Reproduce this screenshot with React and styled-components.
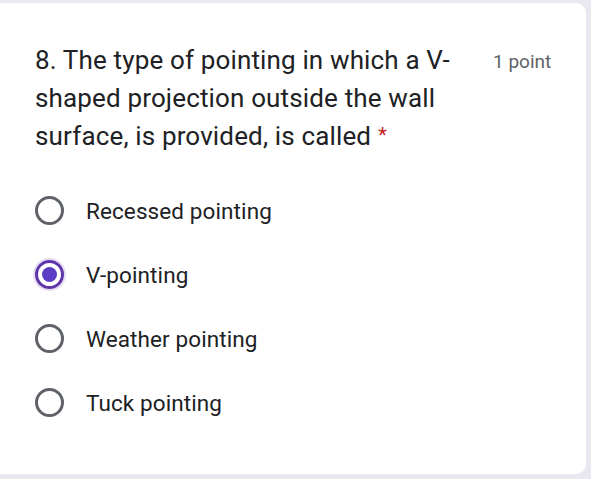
import React, { useState } from "react";
import styled, { createGlobalStyle } from "styled-components";

const GlobalStyle = createGlobalStyle`
  html, body {
    margin: 0;
    padding: 0;
    background: #ebe7f1;
  }
  body {
    font-family: Roboto, "Noto Sans", sans-serif;
  }
`;

const options = [
  { id: 1, label: "Recessed pointing" },
  { id: 2, label: "V-pointing" },
  { id: 3, label: "Weather pointing" },
  { id: 4, label: "Tuck pointing" }
];

const Styled = {
  Page: styled.div`
    width: 591px;
    height: 479px;
    padding: 3px 5px 5px 0;
    box-sizing: border-box;
  `,

  Card: styled.div`
    height: 100%;
    box-sizing: border-box;
    background: #ffffff;
    border-radius: 0 10px 10px 0;
    padding: 39px 0 0 35px;
  `,

  Header: styled.div`
    display: flex;
    align-items: flex-start;
  `,

  Question: styled.div`
    width: 432px;
    font-size: 26px;
    line-height: 37.5px;
    color: #202124;
    letter-spacing: 0.15px;
  `,

  Required: styled.span`
    color: #c5221f;
    font-size: 20px;
    margin-left: 7px;
    vertical-align: 3px;
  `,

  Points: styled.div`
    margin-left: 26px;
    margin-top: 8px;
    font-size: 19px;
    color: #5f6368;
  `,

  List: styled.div`
    display: flex;
    flex-direction: column;
    gap: 28px;
    margin-top: 37px;
  `,

  Option: styled.label`
    display: flex;
    align-items: center;
    height: 36px;
    cursor: pointer;
  `,

  Radio: styled.span`
    width: 29px;
    height: 29px;
    box-sizing: border-box;
    border-radius: 50%;
    border: 3px solid ${({ checked }) => (checked ? "#5e35a8" : "#5f6368")};
    display: flex;
    align-items: center;
    justify-content: center;
    flex-shrink: 0;
    box-shadow: ${({ checked }) => (checked ? "0 0 0 2px #e6dcf3" : "none")};

    &::after {
      content: "";
      width: 15px;
      height: 15px;
      border-radius: 50%;
      background: #5b3cc4;
      display: ${({ checked }) => (checked ? "block" : "none")};
    }
  `,

  Label: styled.span`
    margin-left: 22px;
    font-size: 22.5px;
    color: #202124;
    letter-spacing: 0.1px;
  `
};

function App() {
  const [selected, setSelected] = useState(2);

  return (
    <>
      <GlobalStyle />
      <Styled.Page>
        <Styled.Card>
          <Styled.Header>
            <Styled.Question>
              8. The type of pointing in which a V-
              <br />
              shaped projection outside the wall
              <br />
              surface, is provided, is called
              <Styled.Required>*</Styled.Required>
            </Styled.Question>
            <Styled.Points>1 point</Styled.Points>
          </Styled.Header>

          <Styled.List>
            {options.map(item => (
              <Styled.Option key={item.id} onClick={() => setSelected(item.id)}>
                <Styled.Radio checked={selected === item.id} />
                <Styled.Label>{item.label}</Styled.Label>
              </Styled.Option>
            ))}
          </Styled.List>
        </Styled.Card>
      </Styled.Page>
    </>
  );
}

export default App;
